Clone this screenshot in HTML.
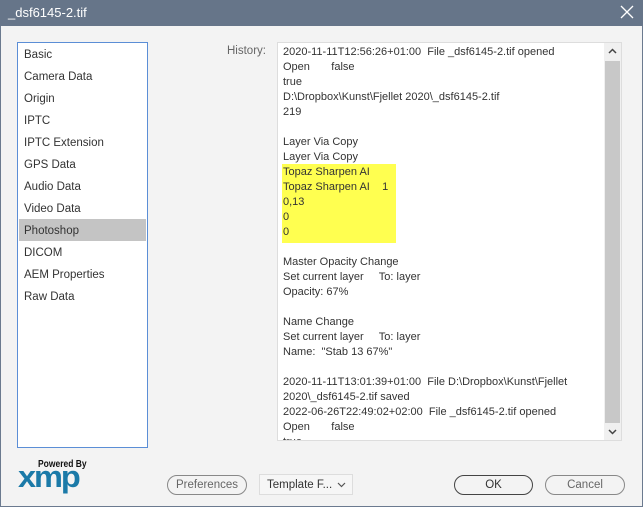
<!DOCTYPE html>
<html><head><style>
*{margin:0;padding:0;box-sizing:border-box}
body{width:643px;height:507px;overflow:hidden;background:#f3f3f3;font-family:"Liberation Sans",sans-serif;font-size:12px;color:#222;position:relative}
.win{position:absolute;left:0;top:0;width:643px;height:507px;border:1px solid #6b7a8f;border-top:none}
.title{position:absolute;left:0;top:0;width:643px;height:26px;background:#667589;color:#fff;font-size:13px;line-height:26px;padding-left:8px}
.x{position:absolute;right:8px;top:4px;width:16px;height:16px}
.list{position:absolute;left:17px;top:42px;width:131px;height:406px;background:#fff;border:1px solid #5b8ed6}
.list div{height:22px;line-height:24px;padding-left:6px;font-size:11.5px;color:#333}
.list .sel{background:#c4c4c4;margin:0 1px;padding-left:5px}
.lbl{position:absolute;left:227px;top:45px;color:#666;font-size:11.5px}
.panel{position:absolute;left:277px;top:42px;width:345px;height:399px;background:#fff;border:1px solid #ddd;overflow:hidden}
.txt{position:absolute;left:5px;top:2px;line-height:15px;white-space:pre;color:#333;font-size:11px}
.hl{position:absolute;left:4px;top:121px;width:114px;height:79px;background:#ffff50}
.sb{position:absolute;left:326px;top:0;width:17px;height:397px;background:#f0f0f0}
.thumb{position:absolute;left:1px;top:18px;width:15px;height:362px;background:#c8c8c8}
.btn{position:absolute;height:20px;border:1px solid #888;border-radius:10px;text-align:center;line-height:19px;color:#666;background:#f3f3f3;font-size:11.5px}
</style></head><body>
<div class="win"></div>
<div class="title">_dsf6145-2.tif
<svg class="x" viewBox="0 0 16 16"><path d="M2 2L14 14M14 2L2 14" stroke="#fff" stroke-width="1.3"/></svg></div>
<div class="list">
<div>Basic</div><div>Camera Data</div><div>Origin</div><div>IPTC</div><div>IPTC Extension</div><div>GPS Data</div><div>Audio Data</div><div>Video Data</div><div class="sel">Photoshop</div><div>DICOM</div><div>AEM Properties</div><div>Raw Data</div>
</div>
<div class="lbl">History:</div>
<div class="panel">
<div class="hl"></div>
<div class="txt">2020-11-11T12:56:26+01:00  File _dsf6145-2.tif opened
Open       false
true
D:\Dropbox\Kunst\Fjellet 2020\_dsf6145-2.tif
219

Layer Via Copy
Layer Via Copy
Topaz Sharpen AI
Topaz Sharpen AI    1
0,13
0
0

Master Opacity Change
Set current layer     To: layer
Opacity: 67%

Name Change
Set current layer     To: layer
Name:  "Stab 13 67%"

2020-11-11T13:01:39+01:00  File D:\Dropbox\Kunst\Fjellet
2020\_dsf6145-2.tif saved
2022-06-26T22:49:02+02:00  File _dsf6145-2.tif opened
Open       false
true</div>
<div class="sb"><div class="thumb"></div>
<svg style="position:absolute;left:4px;top:5px" width="9" height="6" viewBox="0 0 9 6"><path d="M1 5L4.5 1.5L8 5" stroke="#444" stroke-width="1.5" fill="none"/></svg>
<svg style="position:absolute;left:4px;top:386px" width="9" height="6" viewBox="0 0 9 6"><path d="M1 1L4.5 4.5L8 1" stroke="#444" stroke-width="1.5" fill="none"/></svg>
</div>
</div>
<div style="position:absolute;left:38px;top:459px;font-size:10px;font-weight:bold;color:#111;transform:scaleX(0.85);transform-origin:left">Powered By</div>
<div style="position:absolute;left:18px;top:459px;font-size:31px;font-weight:bold;color:#1b7aa8;letter-spacing:-2px;transform:scaleX(1.05);transform-origin:left">xmp</div>
<div class="btn" style="left:167px;top:475px;width:80px">Preferences</div>
<div style="position:absolute;left:259px;top:474px;width:94px;height:21px;border:1px solid #ddd;background:#f6f6f6;line-height:20px;padding-left:7px;color:#333;font-size:11.5px">Template F...
<svg style="position:absolute;right:6px;top:7px" width="9" height="6" viewBox="0 0 9 6"><path d="M1 1L4.5 4.5L8 1" stroke="#555" stroke-width="1.2" fill="none"/></svg></div>
<div class="btn" style="left:454px;top:475px;width:79px;border-color:#444;color:#333">OK</div>
<div class="btn" style="left:545px;top:475px;width:80px">Cancel</div>
</body></html>
